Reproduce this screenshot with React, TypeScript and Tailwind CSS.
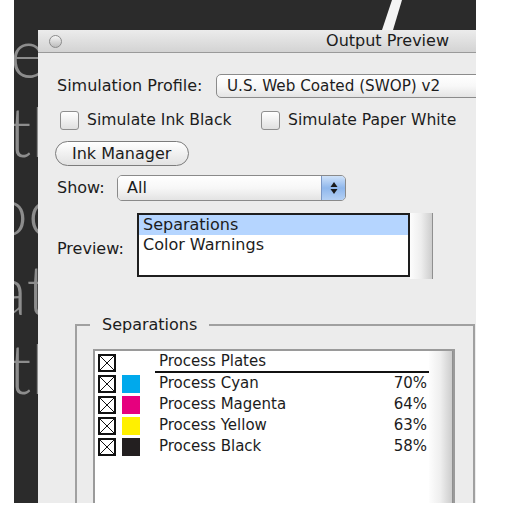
import React from "react";

function XBox() {
  return (
    <svg width="18" height="18" viewBox="0 0 18 18" className="shrink-0">
      <rect x="1" y="1" width="16" height="16" fill="white" stroke="#111" strokeWidth="2" />
      <path d="M2 2L16 16M16 2L2 16" stroke="#111" strokeWidth="1" />
    </svg>
  );
}

function SepRow({ color, name, pct, head }: { color?: string; name: string; pct?: string; head?: boolean }) {
  return (
    <div className="flex h-[21px] items-center">
      <XBox />
      <div className="ml-[6px] w-[18px] h-[18px] shrink-0" style={color ? { backgroundColor: color } : undefined} />
      <div
        className={
          head
            ? "ml-[15px] flex-1 h-full flex items-center justify-between pl-[4px] pr-[2px] border-b-2 border-[#111]"
            : "ml-[15px] flex-1 h-full flex items-center justify-between pl-[4px] pr-[2px]"
        }
      >
        <span>{name}</span>
        {pct && <span>{pct}</span>}
      </div>
    </div>
  );
}

export default function App() {
  return (
    <div className="w-[512px] h-[512px] bg-white overflow-hidden font-['DejaVu_Sans',sans-serif] text-[#1c1c1c]">
      <div className="ml-[14px] w-[462px] h-[503px] bg-[#2b2b2b] overflow-hidden flex">
        {/* background slide letters */}
        <div className="w-[24px] shrink-0 overflow-hidden pt-[12px] font-['Lato',sans-serif] font-light text-[68px] leading-[79px] text-[#8d8d8d] whitespace-nowrap">
          <div className="w-[24px] overflow-hidden"><div className="ml-[-4px]">e</div></div>
          <div className="w-[24px] overflow-hidden"><div className="ml-[-6px]">th</div></div>
          <div className="w-[24px] overflow-hidden"><div className="ml-[-24px]">oc</div></div>
          <div className="w-[24px] overflow-hidden"><div className="ml-[-20px]">at</div></div>
          <div className="w-[24px] overflow-hidden"><div className="ml-[-6px]">th</div></div>
        </div>
        <div className="flex-1 min-w-0 flex flex-col">
          <div className="h-[30px] shrink-0">
            <svg width="438" height="30" viewBox="0 0 438 30">
              <polygon points="354,0 364,0 355,30 344,30" fill="#f4f4f4" />
            </svg>
          </div>
          {/* dialog */}
          <div className="flex-1 bg-[#ececec] flex flex-col overflow-hidden">
            <div className="h-[23px] shrink-0 flex items-center justify-between pl-[11px] pr-[27px] bg-linear-to-b from-[#ececec] to-[#d3d3d3] border-b border-[#9a9a9a]">
              <div className="w-[13px] h-[13px] rounded-full border border-[#8a8a8a] bg-linear-to-b from-[#f6f6f6] to-[#bdbdbd]" />
              <div className="text-[16px] leading-[20px]">Output Preview</div>
            </div>
            <div className="pl-[19px] pt-[21px] flex flex-col text-[16px]">
              <div className="flex items-center h-[24px]">
                <div className="w-[159px] shrink-0">Simulation Profile:</div>
                <div className="h-[24px] w-[300px] shrink-0 rounded-l-[5px] border border-[#8b8b8b] bg-linear-to-b from-white via-[#f8f8f8] to-[#e4e4e4] pl-[10px] flex items-center whitespace-nowrap text-[15.2px]">
                  U.S. Web Coated (SWOP) v2
                </div>
              </div>
              <div className="mt-[13px] flex items-center h-[19px]">
                <div className="w-[201px] ml-[3px] flex items-center shrink-0">
                  <div className="w-[19px] h-[19px] rounded-[3px] border border-[#8e8e8e] bg-linear-to-b from-white to-[#e0e0e0] shrink-0" />
                  <span className="ml-[8px] whitespace-nowrap text-[15.6px]">Simulate Ink Black</span>
                </div>
                <div className="flex items-center">
                  <div className="w-[19px] h-[19px] rounded-[3px] border border-[#8e8e8e] bg-linear-to-b from-white to-[#e0e0e0] shrink-0" />
                  <span className="ml-[8px] whitespace-nowrap text-[15.6px]">Simulate Paper White</span>
                </div>
              </div>
              <div className="mt-[11px] flex">
                <div className="ml-[-2px] w-[134px] h-[25px] rounded-full border border-[#7c7c7c] bg-linear-to-b from-white to-[#e2e2e2] pl-[16px] flex items-center">
                  Ink Manager
                </div>
              </div>
              <div className="mt-[9px] flex items-center h-[26px]">
                <div className="w-[60px] shrink-0">Show:</div>
                <div className="w-[229px] h-[26px] rounded-[5px] border border-[#8a8a8a] flex overflow-hidden shrink-0">
                  <div className="flex-1 pl-[9px] flex items-center bg-linear-to-b from-white via-[#f7f7f7] to-[#e3e3e3]">All</div>
                  <div className="w-[24px] flex items-center justify-center border-l border-[#7b97c4] bg-linear-to-b from-[#cfe2f9] via-[#8fb7ec] to-[#b4d0f4]">
                    <svg width="10" height="16" viewBox="0 0 10 16">
                      <polygon points="5,2 8.5,7 1.5,7" fill="#1a1a1a" />
                      <polygon points="1.5,9 8.5,9 5,14" fill="#1a1a1a" />
                    </svg>
                  </div>
                </div>
              </div>
              <div className="mt-[12px] flex items-start">
                <div className="w-[80px] shrink-0 pt-[24px]">Preview:</div>
                <div className="w-[273px] h-[64px] border-2 border-[#1e1e1e] bg-white shrink-0">
                  <div className="h-[20px] bg-[#b5d5ff] pl-[4px] leading-[20px]">Separations</div>
                  <div className="h-[20px] pl-[4px] leading-[20px]">Color Warnings</div>
                </div>
                <div className="w-[23px] h-[66px] shrink-0 bg-linear-to-r from-[#fdfdfd] via-[#eeeeee] to-[#cdcdcd] border-r border-[#8f8f8f]" />
              </div>
              <fieldset className="mt-[36px] ml-[18px] w-[400px] h-[220px] border-2 border-b-0 border-[#a0a0a0] shrink-0">
                <legend className="ml-[13px] px-[12px] leading-[20px]">Separations</legend>
                <div className="ml-[16px] mt-[14px] w-[362px] h-[180px] border-2 border-[#9a9a9a] flex">
                  <div className="flex-1 bg-white pt-[1px] pl-[3px] text-[15px]">
                    <SepRow name="Process Plates" head />
                    <SepRow name="Process Cyan" color="#00a9ec" pct="70%" />
                    <SepRow name="Process Magenta" color="#e6007e" pct="64%" />
                    <SepRow name="Process Yellow" color="#fff000" pct="63%" />
                    <SepRow name="Process Black" color="#231f20" pct="58%" />
                  </div>
                  <div className="w-[24px] bg-linear-to-r from-[#fdfdfd] via-[#eeeeee] to-[#cdcdcd] border-r border-[#8f8f8f]" />
                </div>
              </fieldset>
            </div>
          </div>
        </div>
      </div>
    </div>
  );
}
